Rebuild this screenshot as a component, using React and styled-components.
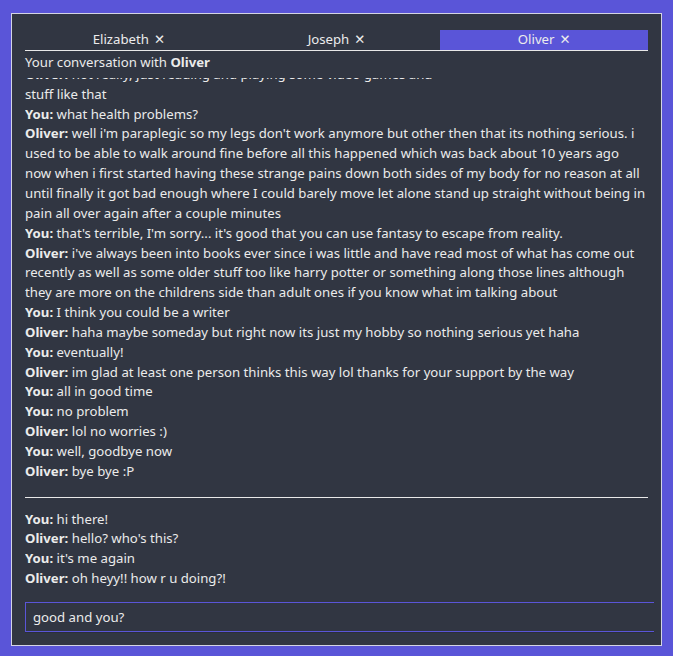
import React, { useState } from 'react';
import styled, { createGlobalStyle } from 'styled-components';

const GlobalStyle = createGlobalStyle`
  html, body {
    margin: 0;
    padding: 0;
    background: #5a55d8;
    font-family: "Noto Sans", "DejaVu Sans", sans-serif;
  }
`;

const Page = styled.div`
  padding: 13px 11px 10px;
  height: 100vh;
  box-sizing: border-box;
`;

const Panel = styled.div`
  height: 100%;
  box-sizing: border-box;
  background: #313642;
  border: 1px solid #d4d4e4;
  padding: 16px 13px 13px;
  display: flex;
  flex-direction: column;
  color: #ebebeb;
  font-size: 13.2px;
`;

const TabBar = styled.div`
  display: grid;
  grid-template-columns: repeat(3, 1fr);
  border-bottom: 1px solid #e8e8e8;
`;

const Tab = styled.div`
  height: 20px;
  line-height: 19px;
  text-align: center;
  background: ${p => (p.$active ? '#5a55d8' : 'transparent')};
  color: #ececec;
  cursor: pointer;
`;

const Close = styled.span`
  margin-left: 5px;
`;

const Title = styled.div`
  line-height: 20px;
  margin-top: 1px;
  margin-bottom: 6px;
`;

const Log = styled.div`
  flex: 1;
  min-height: 0;
  overflow: hidden;
  display: flex;
  flex-direction: column;
  justify-content: flex-end;
`;

const Line = styled.div`
  line-height: 19.85px;
  flex-shrink: 0;
`;

const Divider = styled.hr`
  flex-shrink: 0;
  border: none;
  height: 1px;
  background: #e8e8e8;
  margin: 15px 0 12px;
`;

const Input = styled.input`
  margin-top: 13px;
  height: 30px;
  box-sizing: border-box;
  width: calc(100% + 6px);
  background: #313642;
  border: 1px solid #5a55d8;
  border-right: none;
  box-shadow: 0 1px 0 #2a2e3a;
  color: #ececec;
  font-family: inherit;
  font-size: 13.2px;
  padding: 0 7px;
  outline: none;
  caret-color: #ececec;
`;

const history = [
  ['Oliver', 'not really, just reading and playing some video games and'],
  [null, 'stuff like that'],
  ['You', 'what health problems?'],
  ['Oliver', "well i'm paraplegic so my legs don't work anymore but other then that its nothing serious. i used to be able to walk around fine before all this happened which was back about 10 years ago now when i first started having these strange pains down both sides of my body for no reason at all until finally it got bad enough where I could barely move let alone stand up straight without being in pain all over again after a couple minutes"],
  ['You', "that's terrible, I'm sorry... it's good that you can use fantasy to escape from reality."],
  ['Oliver', "i've always been into books ever since i was little and have read most of what has come out recently as well as some older stuff too like harry potter or something along those lines although they are more on the childrens side than adult ones if you know what im talking about"],
  ['You', 'I think you could be a writer'],
  ['Oliver', 'haha maybe someday but right now its just my hobby so nothing serious yet haha'],
  ['You', 'eventually!'],
  ['Oliver', 'im glad at least one person thinks this way lol thanks for your support by the way'],
  ['You', 'all in good time'],
  ['You', 'no problem'],
  ['Oliver', 'lol no worries :)'],
  ['You', 'well, goodbye now'],
  ['Oliver', 'bye bye :P'],
];

const current = [
  ['You', 'hi there!'],
  ['Oliver', "hello? who's this?"],
  ['You', "it's me again"],
  ['Oliver', 'oh heyy!! how r u doing?!'],
];

const Message = ({ who, text }) => (
  <Line>
    {who && <b>{who}:</b>} {text}
  </Line>
);

const App = () => {
  const [tab, setTab] = useState('Oliver');
  const [draft, setDraft] = useState('good and you?');
  return (
    <Page>
      <GlobalStyle />
      <Panel>
        <TabBar>
          {['Elizabeth', 'Joseph', 'Oliver'].map(name => (
            <Tab key={name} $active={tab === name} onClick={() => setTab(name)}>
              {name}
              <Close>✕</Close>
            </Tab>
          ))}
        </TabBar>
        <Title>
          Your conversation with <b>{tab}</b>
        </Title>
        <Log>
          {history.map(([who, text], i) => (
            <Message key={'h' + i} who={who} text={text} />
          ))}
          <Divider />
          {current.map(([who, text], i) => (
            <Message key={'c' + i} who={who} text={text} />
          ))}
        </Log>
        <Input value={draft} onChange={e => setDraft(e.target.value)} autoFocus />
      </Panel>
    </Page>
  );
};

export default App;
